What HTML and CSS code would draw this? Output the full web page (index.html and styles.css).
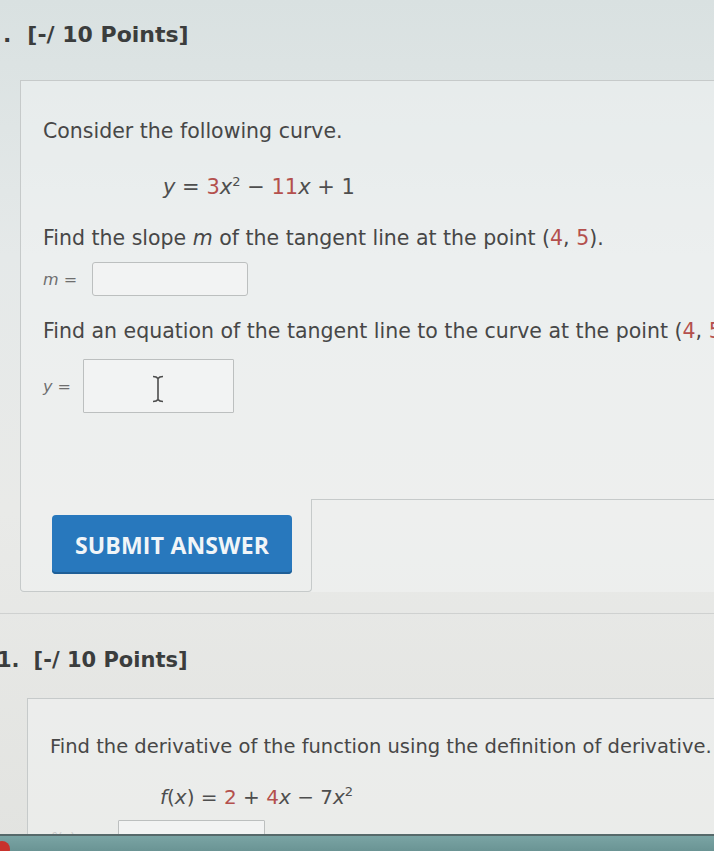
FILE: index.html
```html
<!DOCTYPE html>
<html lang="en">
<head>
<meta charset="utf-8">
<title>Tangent line</title>
<link rel="stylesheet" href="styles.css">
</head>
<body>
<div class="page">
  <div class="content">
    <header class="q-head q-head-first"><span class="qnum">.</span><span>[-/ 10 Points]</span></header>
    <section class="card">
      <div class="body">
        <p class="line lead">Consider the following curve.</p>
        <p class="line eq"><i>y</i> = <span class="red">3</span><i>x</i><sup>2</sup> &minus; <span class="red">11</span><i>x</i> + 1</p>
        <p class="line q1">Find the slope <i>m</i> of the tangent line at the point (<span class="red">4</span>, <span class="red">5</span>).</p>
        <div class="ans ans-m"><span class="lbl"><i>m</i> =</span><span class="box"></span></div>
        <p class="line q2">Find an equation of the tangent line to the curve at the point (<span class="red">4</span>, <span class="red">5</span>).</p>
        <div class="ans ans-y"><span class="lbl"><i>y</i> =</span><span class="box tall"><svg class="ibeam" width="14" height="28" viewBox="0 0 14 28"><path d="M2 1.5c2 0 4 .5 5 2 1-1.5 3-2 5-2M7 3.5v21M2 26.5c2 0 4-.5 5-2 1 1.5 3 2 5 2" fill="none" stroke="#4d4d4d" stroke-width="1.6"/></svg></span></div>
      </div>
      <div class="foot">
        <div class="btn-cell"><button class="submit" type="button">SUBMIT ANSWER</button></div>
        <div class="side"></div>
      </div>
    </section>
    <div class="sep"></div>
    <header class="q-head q-head-second"><span class="qnum">1.</span><span>[-/ 10 Points]</span></header>
    <section class="card card2">
      <div class="body">
        <p class="line lead2">Find the derivative of the function using the definition of derivative.</p>
        <p class="line eq2"><i>f</i>(<i>x</i>) = <span class="red">2</span> + <span class="red">4</span><i>x</i> &minus; 7<i>x</i><sup>2</sup></p>
        <div class="ans ans-f"><span class="lbl faint"><i>f</i>&prime;(<i>x</i>) =</span><span class="box"></span></div>
      </div>
    </section>
  </div>
  <div class="taskbar"><span class="dot"></span></div>
</div>
</body>
</html>
```
FILE: styles.css
```css
html, body {
  margin: 0;
  padding: 0;
}
body {
  width: 714px;
  height: 851px;
  overflow: hidden;
  font-family: "DejaVu Sans", Verdana, sans-serif;
  color: #474747;
  background: linear-gradient(180deg, #d9e1e1 0%, #e5e9e9 30%, #e9eae8 60%, #e2e3e0 100%);
}
.page {
  height: 851px;
  display: flex;
  flex-direction: column;
}
.content {
  flex: 1;
  overflow: hidden;
}
.q-head {
  display: flex;
  font-weight: 700;
  color: #3b3d3d;
}
.q-head-first {
  font-size: 22px;
  line-height: 30px;
  padding-top: 20px;
  gap: 16px;
  padding-left: 3px;
}
.q-head-second {
  font-size: 21px;
  line-height: 26px;
  margin-top: 33px;
  gap: 14px;
  margin-left: -3px;
}
.card {
  margin-top: 30px;
  margin-left: 20px;
  border-top: 1px solid #c6caca;
  background: rgba(244, 246, 246, 0.45);
}
.body {
  border-left: 1px solid #c6caca;
  padding-left: 22px;
  padding-bottom: 86px;
}
.line {
  margin: 0;
  font-size: 20.5px;
  line-height: 26px;
  white-space: nowrap;
}
.red {
  color: #b4504d;
}
sup {
  font-size: 13px;
  line-height: 0;
  vertical-align: 8px;
}
.lead { padding-top: 37px; }
.eq {
  margin-top: 30px;
  padding-left: 120px;
  color: #4e4e4e;
  font-size: 21px;
}
.q1 { margin-top: 25px; }
.q2 { margin-top: 22px; }
.ans {
  display: flex;
  align-items: center;
}
.lbl {
  font-size: 16px;
  color: #6e6e6e;
}
.box {
  display: flex;
  align-items: center;
  justify-content: center;
  box-sizing: border-box;
  border: 1.5px solid #bcbfbf;
  border-radius: 3px;
  background: #f2f3f3;
}
.ans-m { margin-top: 11px; gap: 15px; }
.ans-m .box { width: 156px; height: 34px; }
.ans-y { margin-top: 15px; gap: 12px; }
.ans-y .box { width: 151px; height: 54px; border-radius: 1px; }
.ibeam { margin-top: 6px; }
.foot {
  display: flex;
}
.btn-cell {
  width: 292px;
  flex: 0 0 auto;
  box-sizing: border-box;
  height: 93px;
  border-left: 1px solid #c6caca;
  border-right: 1px solid #c6caca;
  border-bottom: 1px solid #c6caca;
  border-radius: 0 0 4px 4px;
  padding: 16px 0 0 31px;
}
.side {
  flex: 1;
  border-top: 1px solid #c6caca;
}
.submit {
  width: 240px;
  height: 59px;
  border: none;
  border-radius: 4px;
  background: #2878bd;
  box-shadow: inset 0 -2px 0 #1f5f97;
  color: #f1f5f8;
  font-family: "Open Sans", Lato, sans-serif;
  font-weight: 700;
  font-size: 23px;
  letter-spacing: 0.2px;
  padding: 0;
}
.sep {
  margin-top: 21px;
  height: 1px;
  background: #cfd1d0;
}
.card2 {
  margin-top: 25px;
  margin-left: 27px;
}
.card2 .body { padding-bottom: 0; }
.lead2 { padding-top: 35px; font-size: 19.5px; }
.eq2 {
  margin-top: 24px;
  padding-left: 110px;
  color: #4e4e4e;
  font-size: 20px;
}
.ans-f { margin-top: 10px; gap: 28px; }
.faint { color: #b8b8b8; font-size: 13px; opacity: 0.6; }
.ans-f .box { width: 147px; height: 34px; border-radius: 1px; }
.taskbar {
  flex: 0 0 15px;
  border-top: 2px solid #56696a;
  background: linear-gradient(180deg, #7aa4a4, #6a9494);
  position: relative;
}
.dot {
  position: absolute;
  left: -6px;
  top: 5px;
  width: 16px;
  height: 16px;
  border-radius: 50%;
  background: #c8322c;
}
```
